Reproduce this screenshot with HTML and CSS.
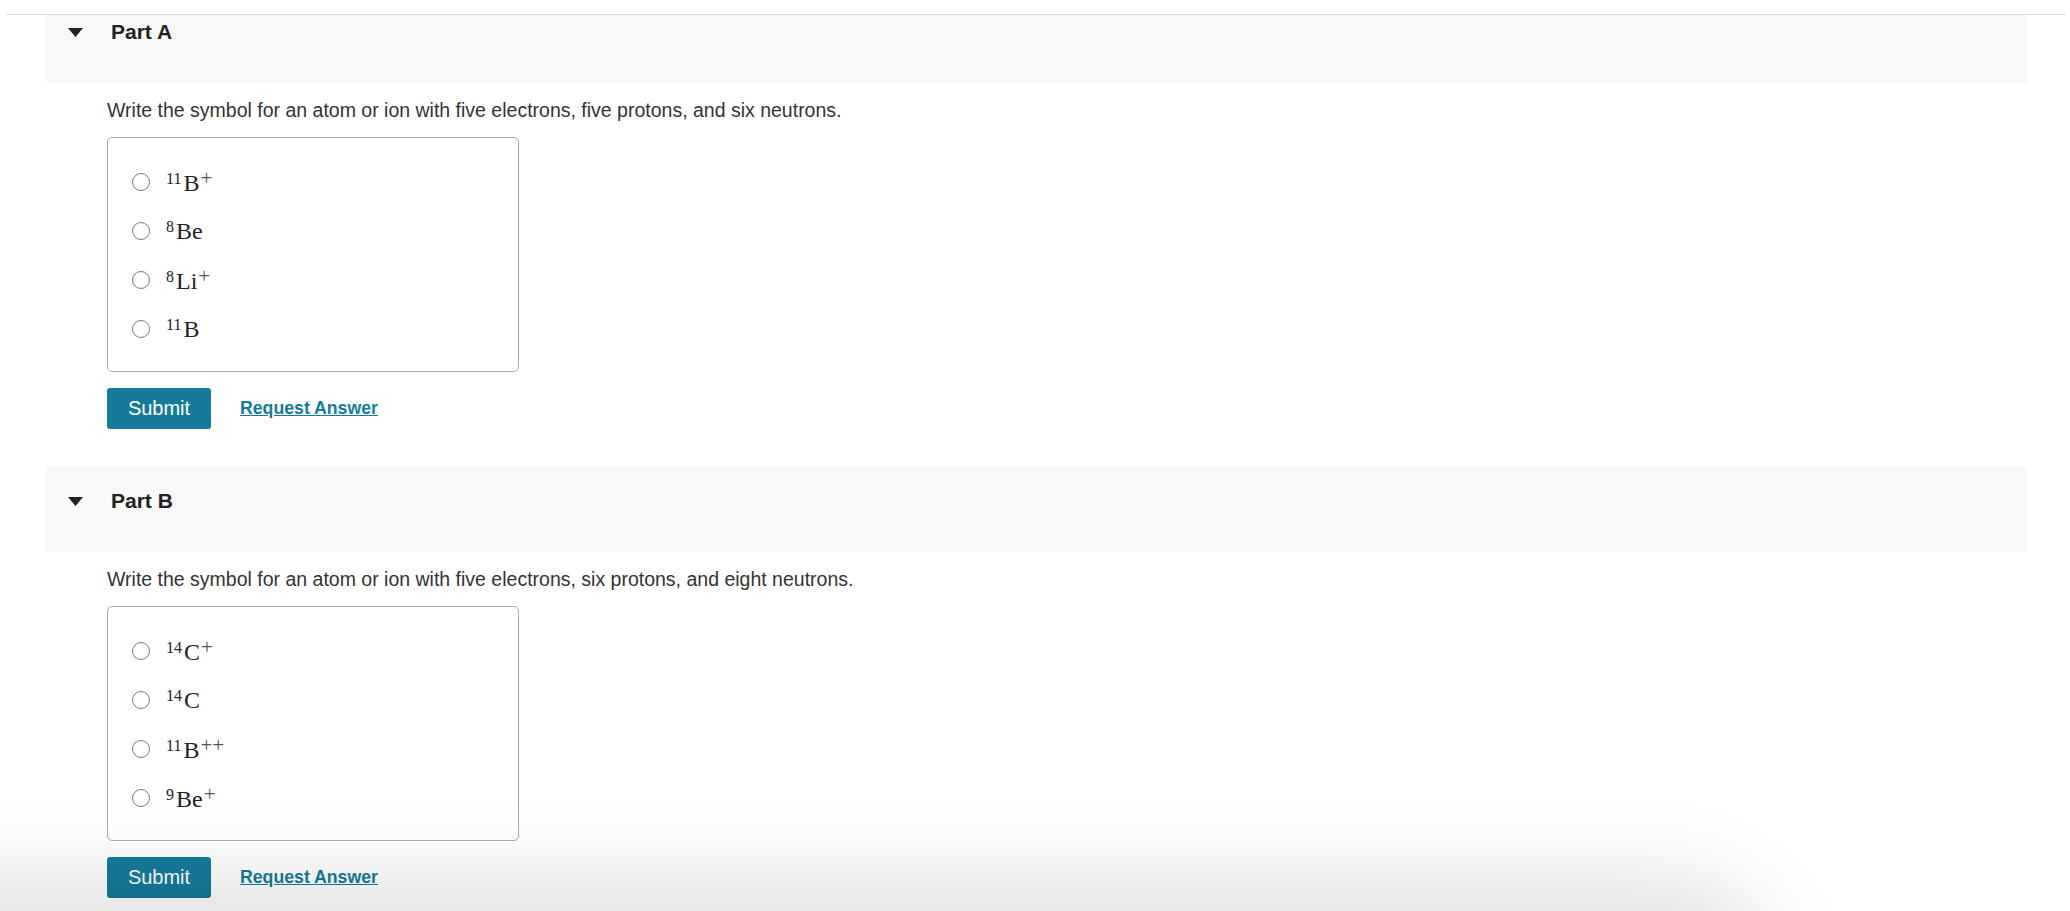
FILE: index.html
```html
<!DOCTYPE html>
<html lang="en">
<head>
    <meta charset="UTF-8">
    <meta name="viewport" content="width=device-width, initial-scale=1.0">
    <title>Assignment - Isotope Symbols</title>
    <link rel="stylesheet" href="styles.css">
</head>
<body>
    <div class="top-rule"></div>

    <div class="parts">
        <!-- Part A -->
        <section class="part">
            <div class="part-header">
                <svg class="caret" width="15" height="9" viewBox="0 0 15 9"><polygon points="0,0 15,0 7.5,9" fill="#222"/></svg>
                <h2>Part A</h2>
            </div>
            <div class="part-body">
                <p class="question">Write the symbol for an atom or ion with five electrons, five protons, and six neutrons.</p>
                <div class="choices">
                    <label class="choice"><input type="radio" name="part-a"><span class="iso"><sup>11</sup>B<sup class="charge">+</sup></span></label>
                    <label class="choice"><input type="radio" name="part-a"><span class="iso"><sup>8</sup>Be</span></label>
                    <label class="choice"><input type="radio" name="part-a"><span class="iso"><sup>8</sup>Li<sup class="charge">+</sup></span></label>
                    <label class="choice"><input type="radio" name="part-a"><span class="iso"><sup>11</sup>B</span></label>
                </div>
                <div class="actions">
                    <button class="submit">Submit</button>
                    <a href="#" class="request">Request Answer</a>
                </div>
            </div>
        </section>

        <!-- Part B -->
        <section class="part">
            <div class="part-header">
                <svg class="caret" width="15" height="9" viewBox="0 0 15 9"><polygon points="0,0 15,0 7.5,9" fill="#222"/></svg>
                <h2>Part B</h2>
            </div>
            <div class="part-body">
                <p class="question">Write the symbol for an atom or ion with five electrons, six protons, and eight neutrons.</p>
                <div class="choices">
                    <label class="choice"><input type="radio" name="part-b"><span class="iso"><sup>14</sup>C<sup class="charge">+</sup></span></label>
                    <label class="choice"><input type="radio" name="part-b"><span class="iso"><sup>14</sup>C</span></label>
                    <label class="choice"><input type="radio" name="part-b"><span class="iso"><sup>11</sup>B<sup class="charge">++</sup></span></label>
                    <label class="choice"><input type="radio" name="part-b"><span class="iso"><sup>9</sup>Be<sup class="charge">+</sup></span></label>
                </div>
                <div class="actions">
                    <button class="submit">Submit</button>
                    <a href="#" class="request">Request Answer</a>
                </div>
            </div>
        </section>
    </div>

    <div class="dock-shade"></div>
</body>
</html>
```

FILE: styles.css
```css
body {
    margin: 0;
    font-family: "Liberation Sans", Arial, sans-serif;
    color: #333;
    background-color: #fff;
    overflow: hidden;
}
.top-rule {
    height: 14px;
    margin: 0 4px 0 6px;
    border-bottom: 1px solid #ddd;
}
.parts {
    padding: 0 43px 0 46px;
    overflow: hidden;
}
/* the list is scrolled a little, so the first header is partly hidden */
.part:first-child {
    margin-top: -17px;
}
.part-header {
    display: flex;
    align-items: flex-start;
    height: 85px;
    padding: 22px 0 0 22px;
    box-sizing: border-box;
    background-color: #f8f8f8;
}
.part-header .caret {
    margin-top: 8px;
    margin-right: 28px;
}
.part-header h2 {
    margin: 0;
    font-size: 21px;
    line-height: 24px;
    font-weight: bold;
    color: #222;
}
.part-body {
    padding: 0 0 38px 61px;
}
.question {
    margin: 15px 0 15px;
    font-size: 19.5px;
    line-height: 24px;
    color: #333;
}
.choices {
    width: 410px;
    padding: 19px 0 18px;
    border: 1px solid #aaa;
    border-radius: 5px;
}
.choice {
    display: flex;
    align-items: center;
    height: 49px;
    padding-left: 24px;
}
.choice input {
    appearance: none;
    -webkit-appearance: none;
    width: 18px;
    height: 18px;
    margin: 0 16px 0 0;
    border: 1.5px solid #7a7a7a;
    border-radius: 50%;
    box-sizing: border-box;
}
.iso {
    font-family: "Liberation Serif", "Times New Roman", serif;
    font-size: 24px;
    color: #222;
    line-height: 1;
}
.iso sup {
    font-size: 16px;
    vertical-align: 7px;
    margin-right: 2px;
}
.iso sup.charge {
    margin: 0 0 0 1px;
    font-size: 21px;
    vertical-align: 6px;
    font-weight: 300;
    color: #555;
}
.actions {
    display: flex;
    align-items: center;
    margin-top: 16px;
    gap: 29px;
}
.submit {
    width: 104px;
    height: 41px;
    background-color: #167b9b;
    color: #fff;
    border: none;
    border-radius: 3px;
    font-family: "Liberation Sans", Arial, sans-serif;
    font-size: 20px;
    cursor: pointer;
}
.request {
    color: #167b9b;
    font-size: 17.7px;
    font-weight: bold;
    text-decoration: underline;
}
.dock-shade {
    position: fixed;
    left: -200px;
    bottom: -70px;
    width: 1940px;
    height: 70px;
    border-radius: 0 200px 0 0;
    box-shadow: 0 0 90px 30px rgba(0, 0, 0, 0.13);
    pointer-events: none;
}
```
